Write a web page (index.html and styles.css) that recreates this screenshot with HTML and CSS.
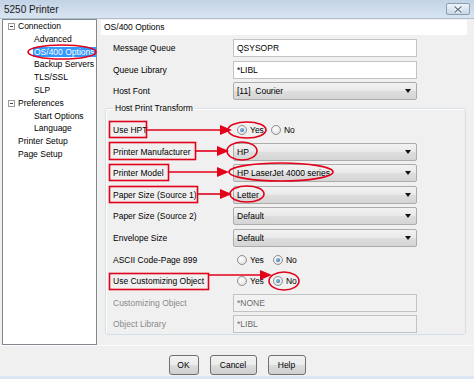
FILE: index.html
```html
<!DOCTYPE html>
<html lang="en">
<head>
  <meta charset="UTF-8" />
  <meta name="viewport" content="width=device-width, initial-scale=1.0"/>
  <title>5250 Printer</title>
  <link rel="stylesheet" href="styles.css">
</head>
<body>
  <div class="window">
    <div class="titlebar">
      <span class="title">5250 Printer</span>
      <span class="close">
        <svg width="10" height="7" viewBox="0 0 10 7">
          <path d="M1.5 0.5 L8.5 6.5 M8.5 0.5 L1.5 6.5" stroke="#fff" stroke-width="3"/>
          <path d="M1.5 0.5 L8.5 6.5 M8.5 0.5 L1.5 6.5" stroke="#6b7b8c" stroke-width="1.4"/>
        </svg>
      </span>
    </div>

    <div class="main">
      <div class="tree">
        <div class="node"><span class="toggle"></span>Connection</div>
        <div class="leaf">Advanced</div>
        <div class="leaf"><span class="selected">OS/400 Options</span></div>
        <div class="leaf">Backup Servers</div>
        <div class="leaf">TLS/SSL</div>
        <div class="leaf">SLP</div>
        <div class="node"><span class="toggle"></span>Preferences</div>
        <div class="leaf">Start Options</div>
        <div class="leaf">Language</div>
        <div class="node plain">Printer Setup</div>
        <div class="node plain">Page Setup</div>
      </div>

      <div class="panel">
        <div class="panel-title">OS/400 Options</div>

        <div class="fields">
          <label>Message Queue</label>
          <div class="input">QSYSOPR</div>
          <label>Queue Library</label>
          <div class="input">*LIBL</div>
          <label>Host Font</label>
          <div class="select">[11]&nbsp; Courier<span class="arrow"></span></div>
        </div>

        <fieldset class="group">
          <legend>Host Print Transform</legend>
          <div class="fields">
            <label>Use HPT</label>
            <div class="radios">
              <span class="radio"><span class="dot on"></span>Yes</span>
              <span class="radio"><span class="dot"></span>No</span>
            </div>
            <label>Printer Manufacturer</label>
            <div class="select">HP<span class="arrow"></span></div>
            <label>Printer Model</label>
            <div class="select">HP LaserJet 4000 series<span class="arrow"></span></div>
            <label>Paper Size (Source 1)</label>
            <div class="select">Letter<span class="arrow"></span></div>
            <label>Paper Size (Source 2)</label>
            <div class="select">Default<span class="arrow"></span></div>
            <label>Envelope Size</label>
            <div class="select">Default<span class="arrow"></span></div>
            <label>ASCII Code-Page 899</label>
            <div class="radios wide">
              <span class="radio"><span class="dot"></span>Yes</span>
              <span class="radio"><span class="dot on"></span>No</span>
            </div>
            <label>Use Customizing Object</label>
            <div class="radios wide">
              <span class="radio"><span class="dot"></span>Yes</span>
              <span class="radio"><span class="dot on"></span>No</span>
            </div>
            <label class="disabled">Customizing Object</label>
            <div class="input disabled">*NONE</div>
            <label class="disabled">Object Library</label>
            <div class="input disabled">*LIBL</div>
          </div>
        </fieldset>
      </div>
    </div>

    <div class="buttons">
      <button class="btn-ok">OK</button>
      <button class="btn-cancel">Cancel</button>
      <button class="btn-help">Help</button>
    </div>

    <!-- red callouts drawn over the dialog -->
    <svg class="marks" width="474" height="379" viewBox="0 0 474 379">
      <g fill="none" stroke="#e2001a" stroke-width="1.6">
        <ellipse cx="62" cy="52" rx="34" ry="7"/>

        <rect x="109.5" y="121.5" width="37" height="16"/>
        <line x1="147" y1="130" x2="222" y2="130"/>
        <ellipse cx="247" cy="130" rx="19" ry="8"/>

        <rect x="109.5" y="142.5" width="86" height="17"/>
        <line x1="196" y1="151" x2="219" y2="151"/>
        <ellipse cx="242" cy="151" rx="15" ry="9"/>

        <rect x="109.5" y="164.5" width="59" height="16"/>
        <line x1="169" y1="172" x2="219" y2="172"/>
        <ellipse cx="281" cy="172" rx="52" ry="9"/>

        <rect x="109.5" y="186.5" width="88" height="16"/>
        <line x1="198" y1="194" x2="222" y2="194"/>
        <ellipse cx="247" cy="194" rx="17" ry="8"/>

        <rect x="109.5" y="273.5" width="99" height="16"/>
        <line x1="209" y1="275" x2="262" y2="275"/>
        <ellipse cx="284" cy="281" rx="15" ry="9"/>
      </g>
      <g fill="#e2001a">
        <polygon points="220,125 232,130 220,135"/>
        <polygon points="217,146 229,151 217,156"/>
        <polygon points="217,167 229,172 217,177"/>
        <polygon points="220,189 232,194 220,199"/>
        <polygon points="260,270 272,275 260,280"/>
      </g>
    </svg>
  </div>
</body>
</html>
```

FILE: styles.css
```css
* {
  box-sizing: border-box;
}

body {
  margin: 0;
  font-family: "Liberation Sans", Arial, sans-serif;
  font-size: 8.5px;
  color: #000;
}

.window {
  position: relative;
  width: 474px;
  height: 379px;
  background: #dbe6f2;
  display: flex;
  flex-direction: column;
}

.titlebar {
  height: 19px;
  display: flex;
  align-items: center;
  justify-content: space-between;
  padding: 0 4px;
  background: linear-gradient(#c2d3e6, #d9e5f1);
  border-bottom: 1px solid #aebdcd;
}

.title {
  font-size: 10px;
  color: #1a1a1a;
}

.close {
  width: 24px;
  height: 12px;
  display: flex;
  align-items: center;
  justify-content: center;
  border: 1px solid #8b9db1;
  border-radius: 2px;
  background: linear-gradient(#eef3f8, #c9d7e6);
}

.main {
  display: flex;
  height: 326px;
  padding: 0 3px 0 2px;
  background: #f0f0f0;
}

/* left tree */
.tree {
  width: 95px;
  background: #fff;
  border: 1px solid #828790;
  line-height: 12.8px;
  white-space: nowrap;
  overflow: hidden;
}

.node {
  display: flex;
  align-items: center;
  padding-left: 5px;
}

.node.plain {
  padding-left: 15px;
}

.toggle {
  position: relative;
  width: 7px;
  height: 7px;
  margin-right: 3px;
  border: 1px solid #9a9a9a;
  background: #fff;
}

.toggle::after {
  content: "";
  position: absolute;
  left: 1px;
  top: 2px;
  width: 3px;
  height: 1px;
  background: #444;
}

.leaf {
  padding-left: 31px;
}

.selected {
  background: #3399ff;
  color: #fff;
  padding: 0 2px 0 1px;
  margin-left: -1px;
}

/* right panel */
.panel {
  flex: 1;
  margin-left: 3px;
}

.panel-title {
  height: 15px;
  line-height: 15px;
  margin: 1px 4px 0 1px;
  padding-left: 3px;
  background: #fff;
}

.fields {
  display: grid;
  grid-template-columns: 120px 184px;
  grid-auto-rows: 18px;
  row-gap: 3.6px;
  align-items: center;
  margin-top: 4px;
  padding-left: 13px;
}

.group {
  width: 361px;
  margin: 3.3px 5px 0 5px;
  padding: 6.5px 0 1px 7px;
  border: 1px solid #d5dfe5;
  border-radius: 3px;
  box-shadow: inset 1px 1px #fff;
}

.group legend {
  padding: 0 2px;
  line-height: 11px;
}

.group .fields {
  margin-top: 0;
  padding-left: 0;
}

label.disabled {
  color: #8a8a8a;
}

.input {
  height: 18px;
  line-height: 16px;
  padding-left: 3px;
  background: #fff;
  border: 1px solid #c3c3c3;
}

.input.disabled {
  background: #f2f2f2;
  color: #6d6d6d;
}

.select {
  height: 18px;
  display: flex;
  align-items: center;
  justify-content: space-between;
  padding: 0 5px 0 3px;
  border: 1px solid #acacac;
  border-radius: 2px;
  background: linear-gradient(#f2f2f2, #e9e9e9 50%, #dedede 50%, #d5d5d5);
}

.arrow {
  width: 0;
  height: 0;
  border-left: 3px solid transparent;
  border-right: 3px solid transparent;
  border-top: 4px solid #111;
}

.radios {
  display: flex;
  gap: 7px;
  padding-left: 4px;
}

.radios.wide {
  gap: 9px;
}

.radio {
  display: flex;
  align-items: center;
  gap: 3px;
}

.dot {
  position: relative;
  width: 10px;
  height: 10px;
  border: 1px solid #8e8f8f;
  border-radius: 50%;
  background: radial-gradient(circle at 40% 35%, #fff, #dadada);
}

.dot.on::after {
  content: "";
  position: absolute;
  left: 2px;
  top: 2px;
  width: 4px;
  height: 4px;
  border-radius: 50%;
  background: radial-gradient(circle at 40% 35%, #8cc4ee, #1b5a93);
}

/* bottom buttons */
.buttons {
  height: 31px;
  display: flex;
  justify-content: center;
  gap: 11px;
  padding-top: 9px;
  background: #f0f0f0;
  border-top: 1px solid #fbfbfb;
}

button {
  height: 20px;
  padding: 0;
  font-family: inherit;
  font-size: 8.5px;
  color: #000;
  border: 1px solid #707070;
  border-radius: 3px;
  background: linear-gradient(#f2f2f2, #ebebeb 50%, #dddddd 50%, #cfcfcf);
}

.btn-ok {
  width: 30px;
}

.btn-cancel {
  width: 47px;
}

.btn-help {
  width: 38px;
}

.marks {
  position: absolute;
  left: 0;
  top: 0;
  pointer-events: none;
}
```
